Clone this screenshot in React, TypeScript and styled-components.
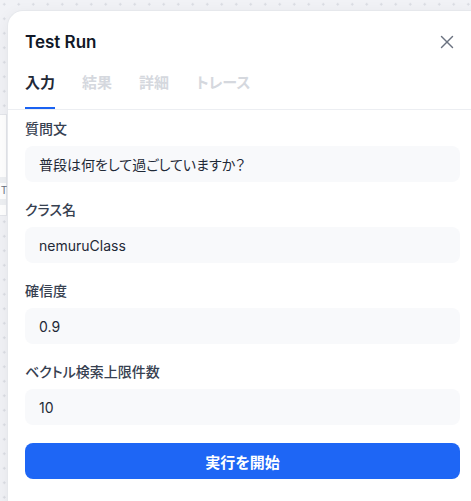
import React, { useState } from 'react';
import styled, { createGlobalStyle } from 'styled-components';
import { X } from 'lucide-react';

const GlobalStyle = createGlobalStyle`
  html, body {
    margin: 0;
    padding: 0;
    height: 100%;
    overflow: hidden;
  }
  body {
    font-family: Inter, "Noto Sans CJK JP", sans-serif;
    font-feature-settings: "palt";
    -webkit-font-smoothing: antialiased;
  }
  * {
    box-sizing: border-box;
  }
`;

const tabs = ['入力', '結果', '詳細', 'トレース'];

const fields = [
  { label: '質問文', value: '普段は何をして過ごしていますか？' },
  { label: 'クラス名', value: 'nemuruClass' },
  { label: '確信度', value: '0.9' },
  { label: 'ベクトル検索上限件数', value: '10' },
];

const App: React.FC = () => {
  const [active, setActive] = useState(0);
  const [values, setValues] = useState(fields.map(f => f.value));

  const handleChange = (index: number) => (event: React.ChangeEvent<HTMLInputElement>) => {
    const next = [...values];
    next[index] = event.target.value;
    setValues(next);
  };

  return (
    <Canvas>
      <GlobalStyle />
      {/* node on the canvas, mostly hidden behind the drawer */}
      <CanvasNode>
        <NodeRow />
        <NodeLetter>T</NodeLetter>
        <NodeRow />
      </CanvasNode>
      <Drawer>
        <Header>
          <Title>Test Run</Title>
          <CloseButton aria-label="close">
            <X size={22} strokeWidth={1.6} />
          </CloseButton>
        </Header>
        <TabBar>
          {tabs.map((tab, i) => (
            <Tab key={tab} $active={i === active} onClick={() => setActive(i)}>
              {tab}
            </Tab>
          ))}
        </TabBar>
        <Body>
          {fields.map((field, i) => (
            <Field key={field.label}>
              <Label>{field.label}</Label>
              <Input value={values[i]} onChange={handleChange(i)} />
            </Field>
          ))}
          <RunButton>実行を開始</RunButton>
        </Body>
      </Drawer>
    </Canvas>
  );
};

export default App;

const Canvas = styled.div`
  position: relative;
  width: 100vw;
  height: 100vh;
  padding: 10px 0 0 7px;
  background-color: #f1f2f6;
  background-image: radial-gradient(circle, #d9dbe2 1px, transparent 1.2px);
  background-size: 14.5px 14.5px;
  background-position: -3px -3px;
  overflow: hidden;
`;

const CanvasNode = styled.div`
  position: absolute;
  left: -60px;
  top: 114px;
  width: 67px;
  height: 102px;
  background: #ffffff;
  border: 1px solid #e4e6eb;
  display: flex;
  flex-direction: column;
  justify-content: flex-end;
  padding-bottom: 10px;
`;

const NodeRow = styled.div`
  height: 6px;
  background: #eef0f3;
`;

const NodeLetter = styled.div`
  font-size: 10px;
  line-height: 16px;
  color: #6b7280;
  padding-left: 60px;
  font-family: "Liberation Sans", sans-serif;
`;

const Drawer = styled.div`
  position: relative;
  width: 470px;
  height: 520px;
  background: #ffffff;
  border: 1px solid #e6e8ec;
  border-right: none;
  border-radius: 16px 0 0 0;
  box-shadow: 0 4px 16px rgba(15, 23, 42, 0.06);
  display: flex;
  flex-direction: column;
`;

const Header = styled.div`
  display: flex;
  align-items: center;
  justify-content: space-between;
  height: 24px;
  margin: 19px 17px 0 17px;
`;

const Title = styled.h2`
  margin: 0;
  font-size: 17px;
  line-height: 24px;
  font-weight: 600;
  color: #111827;
`;

const CloseButton = styled.button`
  width: 26px;
  height: 26px;
  padding: 0;
  border: none;
  background: none;
  color: #6b7280;
  display: flex;
  align-items: center;
  justify-content: center;
  cursor: pointer;
`;

const TabBar = styled.div`
  display: flex;
  gap: 27px;
  margin-top: 18px;
  padding: 0 17px;
  border-bottom: 1px solid #eceef2;
`;

const Tab = styled.div<{ $active: boolean }>`
  font-size: 15px;
  line-height: 22px;
  font-weight: 600;
  padding-bottom: 13px;
  border-bottom: 2px solid ${p => (p.$active ? '#1a62f2' : 'transparent')};
  color: ${p => (p.$active ? '#1f2937' : '#d5d8de')};
  cursor: pointer;
`;

const Body = styled.div`
  display: flex;
  flex-direction: column;
  gap: 18px;
  padding: 9px 17px 0 17px;
`;

const Field = styled.div`
  display: flex;
  flex-direction: column;
  gap: 7px;
`;

const Label = styled.label`
  font-size: 14px;
  line-height: 20px;
  font-weight: 500;
  color: #374151;
`;

const Input = styled.input`
  height: 36px;
  padding: 0 14px;
  border: none;
  border-radius: 8px;
  background: #f8f9fb;
  font-family: inherit;
  font-feature-settings: "palt";
  font-size: 14px;
  color: #1f2937;
  outline: none;
`;

const RunButton = styled.button`
  height: 36px;
  border: none;
  border-radius: 8px;
  background: #1e66f5;
  color: #ffffff;
  font-family: inherit;
  font-feature-settings: "palt";
  font-size: 15px;
  font-weight: 700;
  cursor: pointer;
`;
